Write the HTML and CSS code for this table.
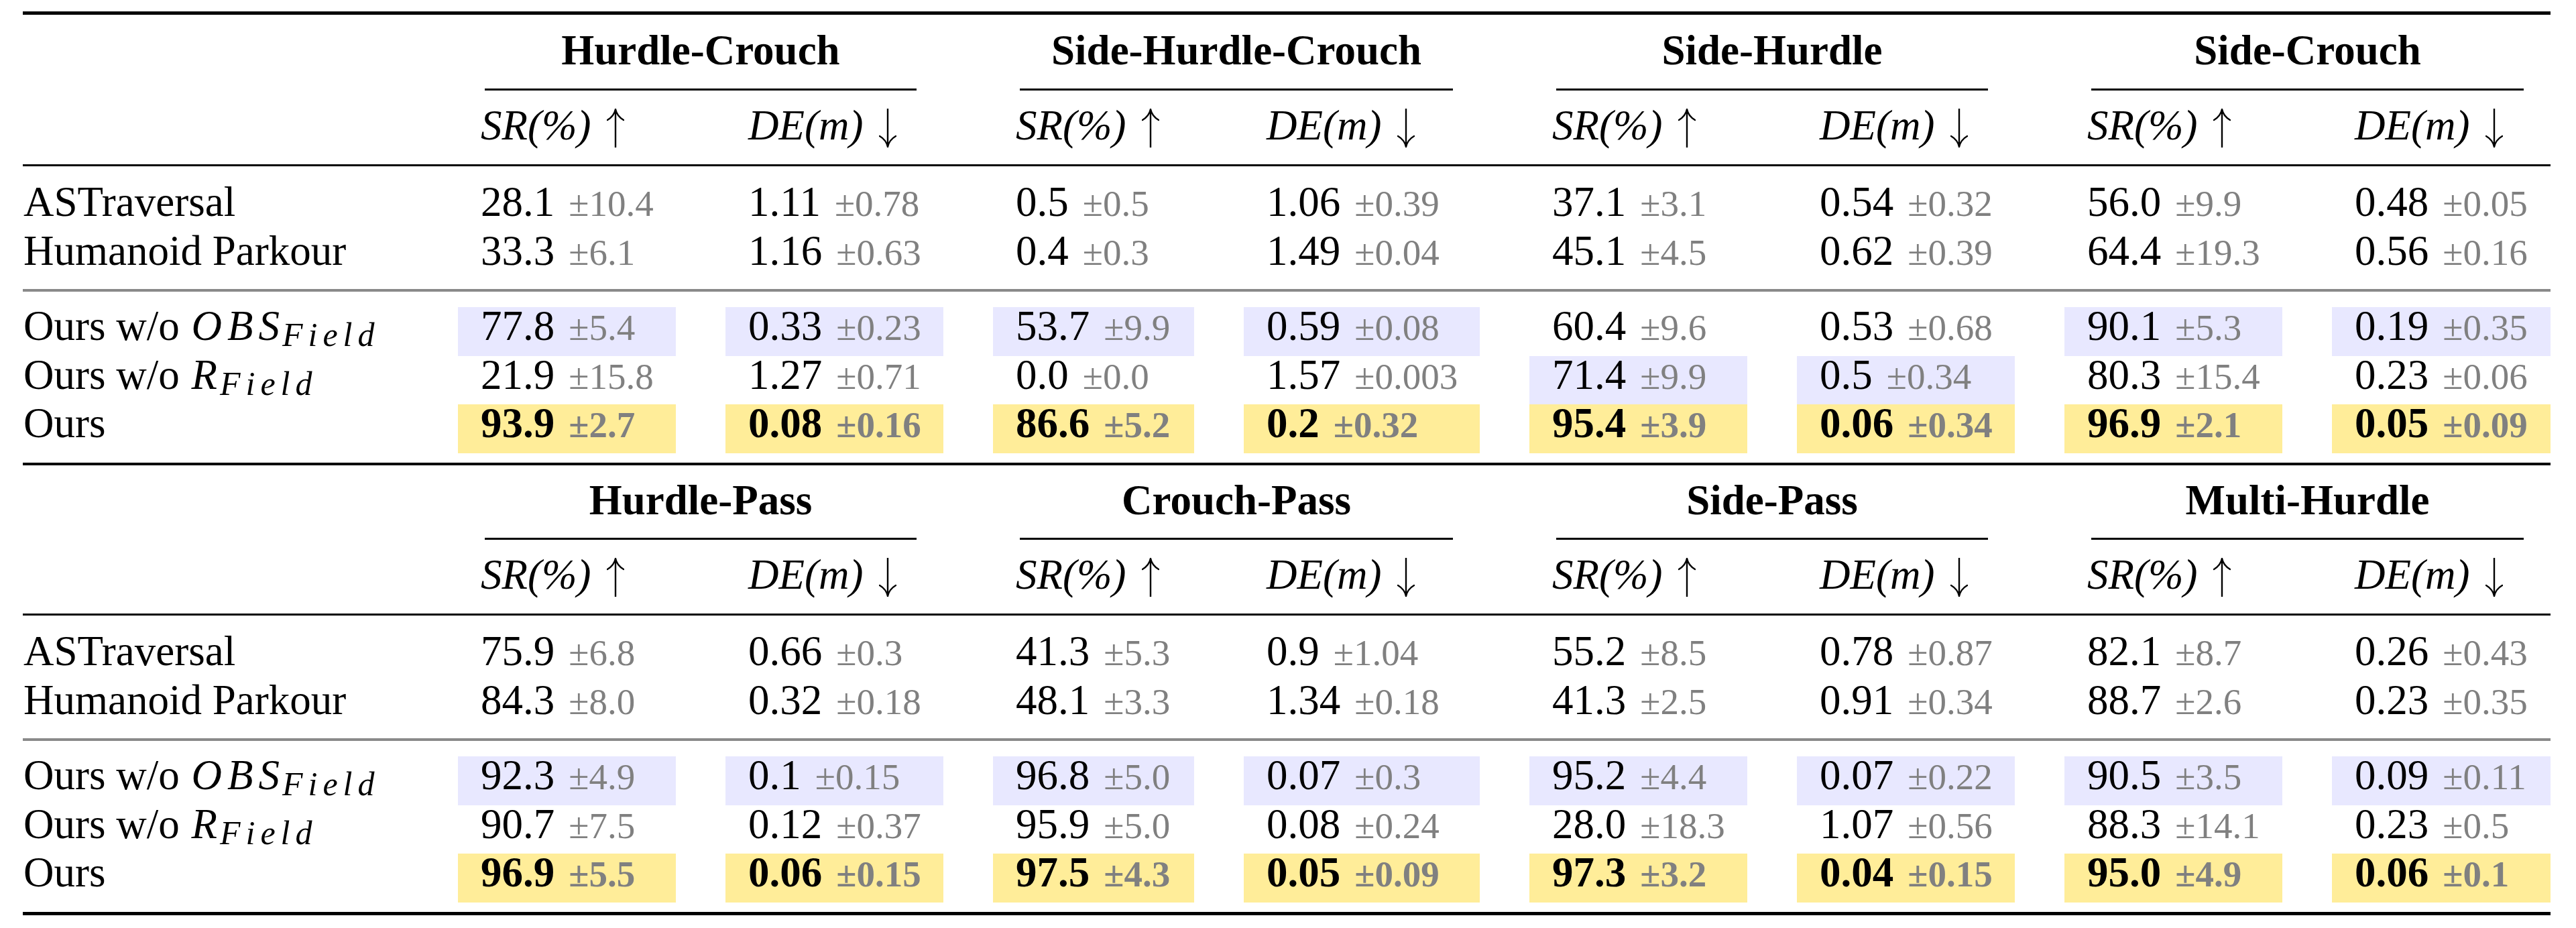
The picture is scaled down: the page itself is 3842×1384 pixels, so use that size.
FILE: index.html
```html
<!DOCTYPE html>
<html>
<head>
<meta charset="utf-8">
<link rel="stylesheet" href="styles.css">
</head>
<body>
<div class="page">
  <div class="rule top"></div>

  <!-- ===== Table 1 ===== -->
  <div class="g hdr1">
    <div></div>
    <div class="grp">Hurdle-Crouch</div>
    <div class="grp">Side-Hurdle-Crouch</div>
    <div class="grp">Side-Hurdle</div>
    <div class="grp">Side-Crouch</div>
  </div>
  <div class="g cmid"><div></div><div class="cm"></div><div class="cm"></div><div class="cm"></div><div class="cm"></div></div>
  <div class="g hdr2">
    <div></div>
    <div class="sh"><i>SR(%)</i><svg class="arr" viewBox="0 0 26 58"><path d="M13 2V58M13 1C11.5 8 7 13.5 1 17M13 1C14.5 8 19 13.5 25 17"/></svg></div>
    <div class="sh"><i>DE(m)</i><svg class="arr" viewBox="0 0 26 58"><path d="M13 0V56M13 57C11.5 50 7 44.5 1 41M13 57C14.5 50 19 44.5 25 41"/></svg></div>
    <div class="sh"><i>SR(%)</i><svg class="arr" viewBox="0 0 26 58"><path d="M13 2V58M13 1C11.5 8 7 13.5 1 17M13 1C14.5 8 19 13.5 25 17"/></svg></div>
    <div class="sh"><i>DE(m)</i><svg class="arr" viewBox="0 0 26 58"><path d="M13 0V56M13 57C11.5 50 7 44.5 1 41M13 57C14.5 50 19 44.5 25 41"/></svg></div>
    <div class="sh"><i>SR(%)</i><svg class="arr" viewBox="0 0 26 58"><path d="M13 2V58M13 1C11.5 8 7 13.5 1 17M13 1C14.5 8 19 13.5 25 17"/></svg></div>
    <div class="sh"><i>DE(m)</i><svg class="arr" viewBox="0 0 26 58"><path d="M13 0V56M13 57C11.5 50 7 44.5 1 41M13 57C14.5 50 19 44.5 25 41"/></svg></div>
    <div class="sh"><i>SR(%)</i><svg class="arr" viewBox="0 0 26 58"><path d="M13 2V58M13 1C11.5 8 7 13.5 1 17M13 1C14.5 8 19 13.5 25 17"/></svg></div>
    <div class="sh"><i>DE(m)</i><svg class="arr" viewBox="0 0 26 58"><path d="M13 0V56M13 57C11.5 50 7 44.5 1 41M13 57C14.5 50 19 44.5 25 41"/></svg></div>
  </div>
  <div class="rule mid"></div>

  <div class="g body b1">
    <div class="c lab">ASTraversal</div>
    <div class="c">28.1<span class="s">±10.4</span></div>
    <div class="c">1.11<span class="s">±0.78</span></div>
    <div class="c">0.5<span class="s">±0.5</span></div>
    <div class="c">1.06<span class="s">±0.39</span></div>
    <div class="c">37.1<span class="s">±3.1</span></div>
    <div class="c">0.54<span class="s">±0.32</span></div>
    <div class="c">56.0<span class="s">±9.9</span></div>
    <div class="c">0.48<span class="s">±0.05</span></div>

    <div class="c lab">Humanoid Parkour</div>
    <div class="c">33.3<span class="s">±6.1</span></div>
    <div class="c">1.16<span class="s">±0.63</span></div>
    <div class="c">0.4<span class="s">±0.3</span></div>
    <div class="c">1.49<span class="s">±0.04</span></div>
    <div class="c">45.1<span class="s">±4.5</span></div>
    <div class="c">0.62<span class="s">±0.39</span></div>
    <div class="c">64.4<span class="s">±19.3</span></div>
    <div class="c">0.56<span class="s">±0.16</span></div>
  </div>
  <div class="rule gray"></div>
  <div class="g body b2">
    <div class="c lab">Ours w/o <span class="m">OBS</span><span class="sub">Field</span></div>
    <div class="c blue">77.8<span class="s">±5.4</span></div>
    <div class="c blue">0.33<span class="s">±0.23</span></div>
    <div class="c blue">53.7<span class="s">±9.9</span></div>
    <div class="c blue">0.59<span class="s">±0.08</span></div>
    <div class="c">60.4<span class="s">±9.6</span></div>
    <div class="c">0.53<span class="s">±0.68</span></div>
    <div class="c blue">90.1<span class="s">±5.3</span></div>
    <div class="c blue">0.19<span class="s">±0.35</span></div>

    <div class="c lab">Ours w/o <span class="m">R</span><span class="sub">Field</span></div>
    <div class="c">21.9<span class="s">±15.8</span></div>
    <div class="c">1.27<span class="s">±0.71</span></div>
    <div class="c">0.0<span class="s">±0.0</span></div>
    <div class="c">1.57<span class="s">±0.003</span></div>
    <div class="c blue">71.4<span class="s">±9.9</span></div>
    <div class="c blue">0.5<span class="s">±0.34</span></div>
    <div class="c">80.3<span class="s">±15.4</span></div>
    <div class="c">0.23<span class="s">±0.06</span></div>

    <div class="c lab">Ours</div>
    <div class="c yel">93.9<span class="s">±2.7</span></div>
    <div class="c yel">0.08<span class="s">±0.16</span></div>
    <div class="c yel">86.6<span class="s">±5.2</span></div>
    <div class="c yel">0.2<span class="s">±0.32</span></div>
    <div class="c yel">95.4<span class="s">±3.9</span></div>
    <div class="c yel">0.06<span class="s">±0.34</span></div>
    <div class="c yel">96.9<span class="s">±2.1</span></div>
    <div class="c yel">0.05<span class="s">±0.09</span></div>
  </div>
  <div class="rule mid2"></div>

  <!-- ===== Table 2 ===== -->
  <div class="g hdr1 second">
    <div></div>
    <div class="grp">Hurdle-Pass</div>
    <div class="grp">Crouch-Pass</div>
    <div class="grp">Side-Pass</div>
    <div class="grp">Multi-Hurdle</div>
  </div>
  <div class="g cmid"><div></div><div class="cm"></div><div class="cm"></div><div class="cm"></div><div class="cm"></div></div>
  <div class="g hdr2">
    <div></div>
    <div class="sh"><i>SR(%)</i><svg class="arr" viewBox="0 0 26 58"><path d="M13 2V58M13 1C11.5 8 7 13.5 1 17M13 1C14.5 8 19 13.5 25 17"/></svg></div>
    <div class="sh"><i>DE(m)</i><svg class="arr" viewBox="0 0 26 58"><path d="M13 0V56M13 57C11.5 50 7 44.5 1 41M13 57C14.5 50 19 44.5 25 41"/></svg></div>
    <div class="sh"><i>SR(%)</i><svg class="arr" viewBox="0 0 26 58"><path d="M13 2V58M13 1C11.5 8 7 13.5 1 17M13 1C14.5 8 19 13.5 25 17"/></svg></div>
    <div class="sh"><i>DE(m)</i><svg class="arr" viewBox="0 0 26 58"><path d="M13 0V56M13 57C11.5 50 7 44.5 1 41M13 57C14.5 50 19 44.5 25 41"/></svg></div>
    <div class="sh"><i>SR(%)</i><svg class="arr" viewBox="0 0 26 58"><path d="M13 2V58M13 1C11.5 8 7 13.5 1 17M13 1C14.5 8 19 13.5 25 17"/></svg></div>
    <div class="sh"><i>DE(m)</i><svg class="arr" viewBox="0 0 26 58"><path d="M13 0V56M13 57C11.5 50 7 44.5 1 41M13 57C14.5 50 19 44.5 25 41"/></svg></div>
    <div class="sh"><i>SR(%)</i><svg class="arr" viewBox="0 0 26 58"><path d="M13 2V58M13 1C11.5 8 7 13.5 1 17M13 1C14.5 8 19 13.5 25 17"/></svg></div>
    <div class="sh"><i>DE(m)</i><svg class="arr" viewBox="0 0 26 58"><path d="M13 0V56M13 57C11.5 50 7 44.5 1 41M13 57C14.5 50 19 44.5 25 41"/></svg></div>
  </div>
  <div class="rule mid"></div>

  <div class="g body b1">
    <div class="c lab">ASTraversal</div>
    <div class="c">75.9<span class="s">±6.8</span></div>
    <div class="c">0.66<span class="s">±0.3</span></div>
    <div class="c">41.3<span class="s">±5.3</span></div>
    <div class="c">0.9<span class="s">±1.04</span></div>
    <div class="c">55.2<span class="s">±8.5</span></div>
    <div class="c">0.78<span class="s">±0.87</span></div>
    <div class="c">82.1<span class="s">±8.7</span></div>
    <div class="c">0.26<span class="s">±0.43</span></div>

    <div class="c lab">Humanoid Parkour</div>
    <div class="c">84.3<span class="s">±8.0</span></div>
    <div class="c">0.32<span class="s">±0.18</span></div>
    <div class="c">48.1<span class="s">±3.3</span></div>
    <div class="c">1.34<span class="s">±0.18</span></div>
    <div class="c">41.3<span class="s">±2.5</span></div>
    <div class="c">0.91<span class="s">±0.34</span></div>
    <div class="c">88.7<span class="s">±2.6</span></div>
    <div class="c">0.23<span class="s">±0.35</span></div>
  </div>
  <div class="rule gray"></div>
  <div class="g body b2">
    <div class="c lab">Ours w/o <span class="m">OBS</span><span class="sub">Field</span></div>
    <div class="c blue">92.3<span class="s">±4.9</span></div>
    <div class="c blue">0.1<span class="s">±0.15</span></div>
    <div class="c blue">96.8<span class="s">±5.0</span></div>
    <div class="c blue">0.07<span class="s">±0.3</span></div>
    <div class="c blue">95.2<span class="s">±4.4</span></div>
    <div class="c blue">0.07<span class="s">±0.22</span></div>
    <div class="c blue">90.5<span class="s">±3.5</span></div>
    <div class="c blue">0.09<span class="s">±0.11</span></div>

    <div class="c lab">Ours w/o <span class="m">R</span><span class="sub">Field</span></div>
    <div class="c">90.7<span class="s">±7.5</span></div>
    <div class="c">0.12<span class="s">±0.37</span></div>
    <div class="c">95.9<span class="s">±5.0</span></div>
    <div class="c">0.08<span class="s">±0.24</span></div>
    <div class="c">28.0<span class="s">±18.3</span></div>
    <div class="c">1.07<span class="s">±0.56</span></div>
    <div class="c">88.3<span class="s">±14.1</span></div>
    <div class="c">0.23<span class="s">±0.5</span></div>

    <div class="c lab">Ours</div>
    <div class="c yel">96.9<span class="s">±5.5</span></div>
    <div class="c yel">0.06<span class="s">±0.15</span></div>
    <div class="c yel">97.5<span class="s">±4.3</span></div>
    <div class="c yel">0.05<span class="s">±0.09</span></div>
    <div class="c yel">97.3<span class="s">±3.2</span></div>
    <div class="c yel">0.04<span class="s">±0.15</span></div>
    <div class="c yel">95.0<span class="s">±4.9</span></div>
    <div class="c yel">0.06<span class="s">±0.1</span></div>
  </div>
  <div class="rule bottom"></div>
</div>
</body>
</html>
```

FILE: styles.css
```css
html, body {
  margin: 0;
  padding: 0;
  background: #ffffff;
}

.page {
  width: 3770px;
  padding: 17px 0 0 34px;
  font-family: "Liberation Serif", "Times New Roman", serif;
  font-size: 63px;
  color: #000;
}

.g {
  display: grid;
  grid-template-columns: 575px 325px 325px 300px 352px 325px 325px 325px 326px;
  column-gap: 74px;
}

.rule { background: #000; }
.rule.top { height: 5px; }
.rule.mid { height: 3px; }
.rule.mid2 { height: 4px; }
.rule.bottom { height: 5px; }
.rule.gray { height: 4px; background: #8a8a8a; }

.hdr1 {
  height: 110px;
  box-sizing: border-box;
}
.hdr1.second { height: 108px; }

.grp {
  grid-column: span 2;
  text-align: center;
  font-weight: bold;
  line-height: 1;
  padding-top: 22px;
  white-space: nowrap;
}
.second .grp { padding-top: 21px; }

.cmid { height: 3px; }
.cm {
  grid-column: span 2;
  margin: 0 40px;
  background: #000;
  height: 3px;
}

.hdr2 { height: 110px; }
.sh {
  padding-top: 21px;
  padding-left: 34px;
  line-height: 1;
  white-space: nowrap;
}
.sh i { font-style: italic; }

.arr {
  width: 26px;
  height: 58px;
  margin-left: 24px;
  vertical-align: -12px;
  fill: none;
  stroke: #000;
  stroke-width: 2.4;
  stroke-linecap: round;
}

.body.b1 { padding: 25px 0 13px; }
.body.b2 { padding: 23px 0 14.5px; }

.c {
  height: 72.5px;
  box-sizing: border-box;
  padding-top: 0.4px;
  padding-left: 34px;
  line-height: 0.9;
  white-space: nowrap;
}
.c.lab { padding-left: 1px; }

.s {
  font-size: 55px;
  color: #808080;
  margin-left: 21px;
}

.blue { background: #e8e8ff; }
.yel { background: #ffed99; font-weight: bold; }

.m {
  font-style: italic;
  letter-spacing: 8px;
  margin-left: 2px;
}
.sub {
  font-style: italic;
  font-size: 50px;
  letter-spacing: 8px;
  vertical-align: -9px;
  margin-left: -4px;
}
```
